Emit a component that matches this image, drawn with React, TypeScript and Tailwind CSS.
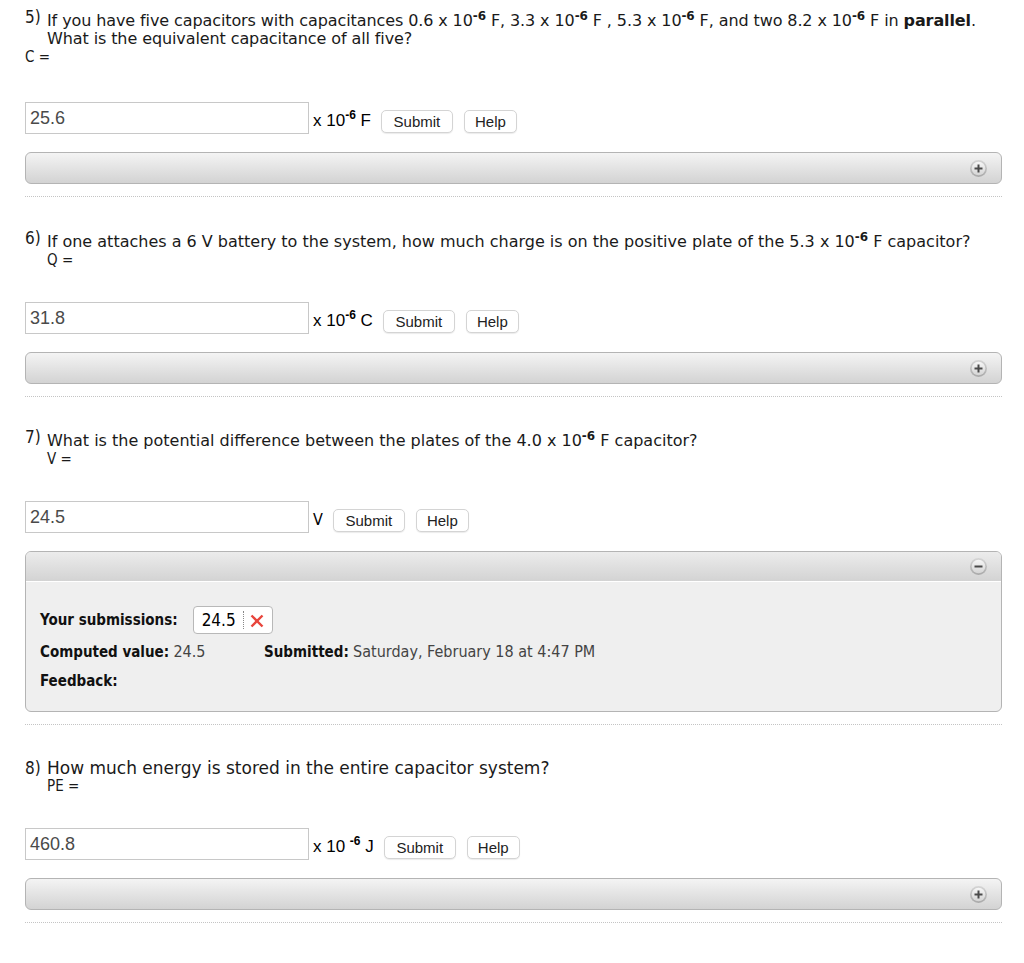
import React from 'react';

// superscript exponent used in question text and units
const Exp = ({ children }: { children: React.ReactNode }) => (
    <span className="text-[12px] font-bold align-super leading-[0]">{children}</span>
);

const CircleIcon = ({ minus = false }: { minus?: boolean }) => (
    <svg width="19" height="19" viewBox="0 0 19 19">
        <defs>
            <linearGradient id={minus ? 'om' : 'op'} x1="0" y1="0" x2="0" y2="1">
                <stop offset="0" stopColor="#d6d6d6" />
                <stop offset="1" stopColor="#a9a9a9" />
            </linearGradient>
            <linearGradient id={minus ? 'im' : 'ip'} x1="0" y1="0" x2="0" y2="1">
                <stop offset="0" stopColor="#f7f7f7" />
                <stop offset="1" stopColor="#d4d4d4" />
            </linearGradient>
        </defs>
        <circle cx="9.5" cy="9.5" r="8.5" fill={`url(#${minus ? 'om' : 'op'})`} />
        <circle cx="9.5" cy="9.5" r="6.8" fill={`url(#${minus ? 'im' : 'ip'})`} />
        <path d="M5.5 9.5h8" stroke="#4a4a4a" strokeWidth="2" />
        {!minus && <path d="M9.5 5.5v8" stroke="#4a4a4a" strokeWidth="2" />}
    </svg>
);

const CollapsedBar = () => (
    <div className="mt-[18px] h-[32px] w-[977px] rounded-[6px] border border-[#b4b4b4] bg-linear-to-b from-[#f4f4f4] to-[#d3d3d3] flex items-center justify-end pr-[13px]">
        <CircleIcon />
    </div>
);

const AnswerRow = ({ value, unit }: { value: string; unit: React.ReactNode }) => (
    <div className="flex items-start">
        <div className="w-[284px] h-[32px] border border-[#c8c8c8] bg-white flex items-center pl-[4px] text-[18px] text-[#4a4a4a] font-['Liberation_Sans',Arial,sans-serif]">
            {value}
        </div>
        <span className="ml-[4px] mt-[7px] leading-[24px] text-[17px] text-black font-['Liberation_Sans',Arial,sans-serif] whitespace-nowrap">{unit}</span>
        <button className="ml-[10px] mt-[8px] h-[23px] w-[72px] rounded-[5px] border border-[#d4d4d4] bg-white text-[15px] text-[#222] font-['Liberation_Sans',Arial,sans-serif] shadow-[0_1px_1px_rgba(0,0,0,0.08)]">
            Submit
        </button>
        <button className="ml-[11px] mt-[8px] h-[23px] w-[53px] rounded-[5px] border border-[#d4d4d4] bg-white text-[15px] text-[#222] font-['Liberation_Sans',Arial,sans-serif] shadow-[0_1px_1px_rgba(0,0,0,0.08)]">
            Help
        </button>
    </div>
);

const Divider = () => <div className="mt-[12px] w-[977px] border-b border-dotted border-[#c4c4c4]" />;

export default function App() {
    return (
        <div className="min-h-screen bg-white pl-[25px] text-[#1a1a1a] font-['DejaVu_Sans',Verdana,sans-serif] text-[16px] leading-[18px]">

            {/* QUESTION 5 */}
            <div className="pt-[12px]">
                <div className="flex">
                    <span className="w-[22px] text-[17px] -mt-[4px] font-['DejaVu_Sans_Condensed',sans-serif]">5)</span>
                    <div className="tracking-[-0.1px]">
                        If you have five capacitors with capacitances 0.6 x 10<Exp>-6</Exp> F, 3.3 x 10<Exp>-6</Exp> F , 5.3 x 10<Exp>-6</Exp> F, and two 8.2 x 10<Exp>-6</Exp> F in <b>parallel</b>.
                        <br />
                        What is the equivalent capacitance of all five?
                    </div>
                </div>
                <div className="text-[15px] font-['DejaVu_Sans_Condensed',sans-serif]">C =</div>
            </div>
            <div className="mt-[36px]">
                <AnswerRow value="25.6" unit={<>x 10<Exp>-6</Exp> F</>} />
            </div>
            <CollapsedBar />
            <Divider />

            {/* QUESTION 6 */}
            <div className="mt-[36px]">
                <div className="flex">
                    <span className="w-[22px] text-[17px] -mt-[4px] font-['DejaVu_Sans_Condensed',sans-serif]">6)</span>
                    <div>
                        If one attaches a 6 V battery to the system, how much charge is on the positive plate of the 5.3 x 10<Exp>-6</Exp> F capacitor?
                        <div className="text-[15px] font-['DejaVu_Sans_Condensed',sans-serif]">Q =</div>
                    </div>
                </div>
            </div>
            <div className="mt-[33px]">
                <AnswerRow value="31.8" unit={<>x 10<Exp>-6</Exp> C</>} />
            </div>
            <CollapsedBar />
            <Divider />

            {/* QUESTION 7 */}
            <div className="mt-[35px]">
                <div className="flex">
                    <span className="w-[22px] text-[17px] -mt-[4px] font-['DejaVu_Sans_Condensed',sans-serif]">7)</span>
                    <div>
                        What is the potential difference between the plates of the 4.0 x 10<Exp>-6</Exp> F capacitor?
                        <div className="text-[15px] font-['DejaVu_Sans_Condensed',sans-serif]">V =</div>
                    </div>
                </div>
            </div>
            <div className="mt-[33px]">
                <AnswerRow value="24.5" unit={<span className="font-['DejaVu_Sans_Condensed',sans-serif] text-[16px]">V</span>} />
            </div>

            {/* expanded submissions panel */}
            <div className="mt-[18px] w-[977px] rounded-[6px] border border-[#b4b4b4] bg-[#efefef] overflow-hidden font-['DejaVu_Sans_Condensed',sans-serif] text-[15px]">
                <div className="h-[30px] bg-linear-to-b from-[#ececec] to-[#d3d3d3] border-b border-white flex items-center justify-end pr-[13px]">
                    <CircleIcon minus />
                </div>
                <div className="pl-[14px] pt-[24px] pb-[21px]">
                    <div className="flex items-center">
                        <span className="font-bold text-[#111]">Your submissions:</span>
                        <div className="ml-[15px] h-[28px] pl-[8px] pr-[7px] flex items-center rounded-[4px] border border-[#b8b8b8] bg-white">
                            <span className="text-[17px] text-black">24.5</span>
                            <span className="ml-[7px] h-[18px] border-l border-dotted border-[#888]" />
                            <svg className="ml-[5px] mt-[2px]" width="16" height="16" viewBox="0 0 16 16">
                                <path d="M2.5 2.5L13.5 13.5M13.5 2.5L2.5 13.5" stroke="#e8453c" strokeWidth="2.4" />
                            </svg>
                        </div>
                    </div>
                    <div className="mt-[9px] flex">
                        <span className="w-[224px]"><b className="text-[#111]">Computed value:</b> <span className="text-[#444] text-[16px]">24.5</span></span>
                        <span><b className="text-[#111]">Submitted:</b> <span className="text-[#444] text-[16px]">Saturday, February 18 at 4:47 PM</span></span>
                    </div>
                    <div className="mt-[11px] font-bold text-[#111]">Feedback:</div>
                </div>
            </div>
            <Divider />

            {/* QUESTION 8 */}
            <div className="mt-[34px]">
                <div className="flex">
                    <span className="w-[22px] text-[17px] font-['DejaVu_Sans_Condensed',sans-serif]">8)</span>
                    <div>
                        <div className="text-[17px]">How much energy is stored in the entire capacitor system?</div>
                        <div className="text-[15px] font-['DejaVu_Sans_Condensed',sans-serif]">PE =</div>
                    </div>
                </div>
            </div>
            <div className="mt-[33px]">
                <AnswerRow value="460.8" unit={<>x 10 <Exp>-6</Exp> J</>} />
            </div>
            <CollapsedBar />
            <Divider />
        </div>
    );
}
